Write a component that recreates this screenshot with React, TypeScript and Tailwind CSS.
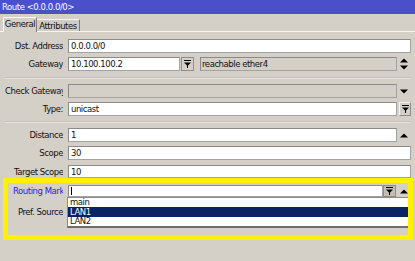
import React from "react";

function DownBar() {
  return (
    <svg width="7" height="8" viewBox="0 0 7 8">
      <rect x="0" y="0" width="7" height="1" fill="#000" />
      <path d="M0 2.5H7L3.5 6Z" fill="#000" />
      <rect x="3" y="5" width="1" height="3" fill="#000" />
    </svg>
  );
}

function Up() {
  return (
    <svg width="8" height="5" viewBox="0 0 8 5">
      <path d="M0 4.5L4 0.5L8 4.5Z" fill="#000" />
    </svg>
  );
}

function Down() {
  return (
    <svg width="8" height="5" viewBox="0 0 8 5">
      <path d="M0 0.5L8 0.5L4 4.5Z" fill="#000" />
    </svg>
  );
}

function UpDown() {
  return (
    <div className="flex flex-col items-center gap-[2px]">
      <Up />
      <Down />
    </div>
  );
}

export default function App() {
  return (
    <div className="w-[415px] h-[261px] overflow-hidden bg-[#d4d0c8] font-['DejaVu_Sans',sans-serif] text-[8.5px] tracking-[-0.45px] text-[#111111] leading-[12px]">
      {/* title bar */}
      <div className="h-[14px] bg-[#4a4fca] text-white flex items-center pl-[2px]">Route &lt;0.0.0.0/0&gt;</div>

      {/* tabs */}
      <div className="h-[18px] flex items-end pl-[3px] border-b border-[#f6f5f2]">
        <div className="relative z-10 -mb-px h-[15px] w-[34px] bg-[#d4d0c8] border-t border-l border-[#fbfbfb] border-r border-r-[#7c7c7c] flex items-center justify-center pb-[2px]">
          General
        </div>
        <div className="h-[12px] w-[43px] border-t border-r border-t-[#f6f5f2] border-r-[#7c7c7c] flex items-center justify-center bg-[#d0ccc4]">
          Attributes
        </div>
      </div>

      {/* panel */}
      <div className="flex flex-col pt-[7px]">
        {/* Dst. Address */}
        <div className="flex items-center h-[14px]">
          <div className="w-[63px] shrink-0 text-right whitespace-nowrap overflow-hidden">Dst. Address</div>
          <div className="ml-[5px] w-[343px] h-full bg-white border border-[#a3a3a3] border-t-[#8a8a8a] border-l-[#8a8a8a] flex items-center pl-[2px]">0.0.0.0/0</div>
        </div>

        {/* Gateway */}
        <div className="flex items-center h-[14px] mt-[4px]">
          <div className="w-[63px] shrink-0 text-right whitespace-nowrap overflow-hidden">Gateway</div>
          <div className="ml-[5px] w-[112px] h-full bg-white border border-[#a3a3a3] border-t-[#8a8a8a] border-l-[#8a8a8a] flex items-center pl-[2px]">10.100.100.2</div>
          <div className="ml-[1px] w-[13px] h-full border border-[#8d8d8d] bg-[#d4d0c8] flex items-center justify-center">
            <DownBar />
          </div>
          <div className="ml-[6px] w-[197px] h-full border border-[#a3a3a3] border-t-[#8a8a8a] border-l-[#8a8a8a] flex items-center pl-[1px]">reachable ether4</div>
          <div className="w-[14px] flex justify-center">
            <UpDown />
          </div>
        </div>

        {/* separator */}
        <div className="mt-[6px] ml-[5px] mr-[5px] h-[2px] border-t border-[#c6c2ba] border-b border-b-[#e6e4df]" />

        {/* Check Gateway */}
        <div className="flex items-center h-[14px] mt-[5px]">
          <div className="w-[63px] shrink-0 text-left pl-[5px] whitespace-nowrap overflow-hidden">Check Gateway</div>
          <div className="ml-[5px] w-[329px] h-full border border-[#a3a3a3] border-t-[#8a8a8a] border-l-[#8a8a8a]" />
          <div className="w-[14px] flex justify-center">
            <Down />
          </div>
        </div>

        {/* Type */}
        <div className="flex items-center h-[14px] mt-[4px]">
          <div className="w-[63px] shrink-0 text-right whitespace-nowrap overflow-hidden">Type:</div>
          <div className="ml-[5px] w-[329px] h-full bg-white border border-[#a3a3a3] border-t-[#8a8a8a] border-l-[#8a8a8a] flex items-center pl-[2px]">unicast</div>
          <div className="ml-[2px] w-[12px] h-full border border-[#8d8d8d] border-t-[#f4f4f4] border-l-[#f4f4f4] flex items-center justify-center">
            <DownBar />
          </div>
        </div>

        {/* separator */}
        <div className="mt-[5px] ml-[5px] mr-[5px] h-[2px] border-t border-[#c6c2ba] border-b border-b-[#e6e4df]" />

        {/* Distance */}
        <div className="flex items-center h-[14px] mt-[5px]">
          <div className="w-[63px] shrink-0 text-right whitespace-nowrap overflow-hidden">Distance</div>
          <div className="ml-[5px] w-[329px] h-full bg-white border border-[#a3a3a3] border-t-[#8a8a8a] border-l-[#8a8a8a] flex items-center pl-[2px]">1</div>
          <div className="w-[14px] flex justify-center">
            <Up />
          </div>
        </div>

        {/* Scope */}
        <div className="flex items-center h-[14px] mt-[4px]">
          <div className="w-[63px] shrink-0 text-right whitespace-nowrap overflow-hidden">Scope</div>
          <div className="ml-[5px] w-[343px] h-full bg-white border border-[#a3a3a3] border-t-[#8a8a8a] border-l-[#8a8a8a] flex items-center pl-[2px]">30</div>
        </div>

        {/* Target Scope */}
        <div className="flex items-center h-[13px] mt-[5px]">
          <div className="w-[63px] shrink-0 text-left pl-[14px] whitespace-nowrap overflow-hidden">Target Scope</div>
          <div className="ml-[5px] w-[343px] h-full bg-white border border-[#a3a3a3] border-t-[#8a8a8a] border-l-[#8a8a8a] flex items-center pl-[2px]">10</div>
        </div>

        {/* highlighted area */}
        <div className="relative ml-[3px] w-[410px] h-[62px] border-[5px] border-[#fff200] flex flex-col">
          {/* Routing Mark */}
          <div className="flex items-center h-[12px] mt-[2px]">
            <div className="w-[55px] shrink-0 text-left pl-[5px] whitespace-nowrap overflow-hidden text-[#2323e6]">Routing Mark</div>
            <div className="ml-[5px] w-[315px] h-full bg-white border border-[#a3a3a3] border-t-[#8a8a8a] border-l-[#8a8a8a] flex items-center pl-[2px]">
              <div className="w-px h-[8px] bg-black" />
            </div>
            <div className="w-[13px] h-full border border-[#8d8d8d] bg-[#c2beb6] flex items-center justify-center">
              <DownBar />
            </div>
            <div className="ml-[4px] w-[8px] flex justify-center">
              <Up />
            </div>
          </div>

          {/* Pref. Source */}
          <div className="flex items-center h-[14px] mt-[8px]">
            <div className="w-[55px] shrink-0 text-right whitespace-nowrap overflow-hidden">Pref. Source</div>
            <div className="ml-[5px] w-[329px] h-full bg-white border border-[#a3a3a3]" />
          </div>

          {/* dropdown list */}
          <div className="absolute left-[59px] top-[14px] w-[341px] h-[31px] bg-white border-l border-t border-[#8a8a8a] border-b-2 border-b-[#6e6e6e] flex flex-col z-20 leading-[9px]">
            <div className="h-[9px] flex items-center pl-[2px]">main</div>
            <div className="h-[10px] flex items-center pl-[2px] bg-[#0a2362] text-white">LAN1</div>
            <div className="h-[9px] flex items-center pl-[2px]">LAN2</div>
          </div>
        </div>
      </div>
    </div>
  );
}
